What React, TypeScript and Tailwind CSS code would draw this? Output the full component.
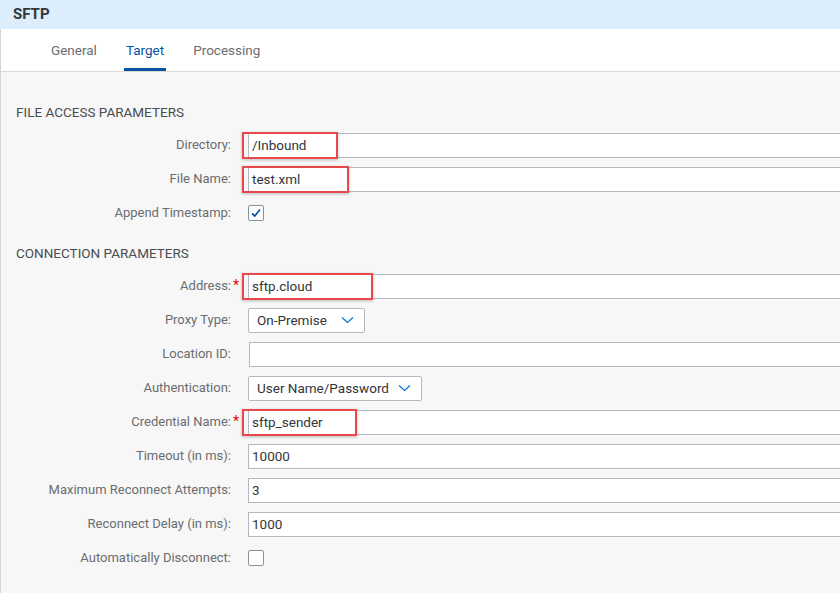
import React from "react";

const font = { fontFamily: "Roboto, 'Liberation Sans', Arial, sans-serif" };

function Chevron() {
  return (
    <svg width="13" height="8" viewBox="0 0 13 8" className="shrink-0">
      <path d="M1 1.5 L6.5 6.5 L12 1.5" fill="none" stroke="#0a6ed1" strokeWidth="1.2" />
    </svg>
  );
}

function RedBox({ left, width, top = -1, height = 27 }: { left: number; width: number; top?: number; height?: number }) {
  return (
    <div
      className="absolute border-2 border-[#e8474c] shadow-[0_1px_3px_rgba(0,0,0,0.25)] pointer-events-none"
      style={{ left, width, top, height }}
    />
  );
}

function Row({
  label,
  required,
  children,
}: {
  label: string;
  required?: boolean;
  children: React.ReactNode;
}) {
  return (
    <div className="flex items-center h-[34px]">
      <div className="w-[230px] shrink-0 text-right text-[13px] text-[#6a6d70] whitespace-nowrap">{label}</div>
      <div className="w-[17px] shrink-0 h-full flex items-center">
        {required && <span className="text-[#e00] text-[14px] ml-[2px] -mt-[2px]">*</span>}
      </div>
      <div className="flex-1 flex items-center h-full relative">{children}</div>
    </div>
  );
}

function TextInput({ value, red }: { value: string; red?: number }) {
  return (
    <div className="relative w-[610px] h-[25px]">
      <div className="h-full bg-white border border-[#b4b9c1] flex items-center pl-[3px] text-[13.5px] text-[#32363a]">
        {value}
      </div>
      {red ? <RedBox left={-6} width={red} /> : null}
    </div>
  );
}

function Select({ value, width }: { value: string; width: number }) {
  return (
    <div
      className="h-[25px] bg-white border border-[#b4b9c1] rounded-[2px] flex items-center justify-between pl-[8px] pr-[10px] text-[13.5px] text-[#32363a]"
      style={{ width }}
    >
      <span>{value}</span>
      <Chevron />
    </div>
  );
}

function Checkbox({ checked }: { checked?: boolean }) {
  return (
    <div className="w-[16px] h-[16px] bg-white border border-[#89919a] rounded-[2px] flex items-center justify-center">
      {checked && (
        <svg width="12" height="12" viewBox="0 0 12 12">
          <path d="M2 6.5 L4.8 9 L10 2.5" fill="none" stroke="#0854a0" strokeWidth="1.7" />
        </svg>
      )}
    </div>
  );
}

export default function App() {
  return (
    <div className="w-[840px] h-[593px] overflow-hidden bg-[#f7f7f7] flex flex-col" style={font}>
      <div className="h-[29px] shrink-0 bg-[#dcedfc] flex items-center pl-[13px] text-[15px] font-bold text-[#32363a]">
        SFTP
      </div>
      <div className="flex-1 flex flex-col border-l border-[#d5d5d5]">
        <div className="h-[43px] shrink-0 bg-white border-b border-[#d9d9d9] flex items-stretch pl-[48px] gap-[25px] text-[13.5px]">
          <div className="flex items-center px-[2px] text-[#6a6d70] border-b-[3px] border-transparent pt-[3px]">General</div>
          <div className="flex items-center px-[2px] text-[#0854a0] border-b-[3px] border-[#0854a0] pt-[3px]">Target</div>
          <div className="flex items-center px-[2px] text-[#6a6d70] border-b-[3px] border-transparent pt-[3px]">Processing</div>
        </div>
        <div className="flex flex-col">
          <div className="mt-[32px] pl-[15px] h-[16px] leading-[16px] text-[13.5px] text-[#4a4d50]">FILE ACCESS PARAMETERS</div>
          <div className="mt-[8px]">
            <Row label="Directory:">
              <TextInput value="/Inbound" red={96} />
            </Row>
            <Row label="File Name:">
              <TextInput value="test.xml" red={107} />
            </Row>
            <Row label="Append Timestamp:">
              <Checkbox checked />
            </Row>
          </div>
          <div className="mt-[15px] pl-[15px] h-[16px] leading-[16px] text-[13.5px] text-[#4a4d50]">CONNECTION PARAMETERS</div>
          <div className="mt-[8px]">
            <Row label="Address:" required>
              <TextInput value="sftp.cloud" red={131} />
            </Row>
            <Row label="Proxy Type:">
              <Select value="On-Premise" width={117} />
            </Row>
            <Row label="Location ID:">
              <div className="ml-[1px]">
                <TextInput value="" />
              </div>
            </Row>
            <Row label="Authentication:">
              <Select value="User Name/Password" width={174} />
            </Row>
            <Row label="Credential Name:" required>
              <TextInput value="sftp_sender" red={115} />
            </Row>
            <Row label="Timeout (in ms):">
              <TextInput value="10000" />
            </Row>
            <Row label="Maximum Reconnect Attempts:">
              <TextInput value="3" />
            </Row>
            <Row label="Reconnect Delay (in ms):">
              <TextInput value="1000" />
            </Row>
            <Row label="Automatically Disconnect:">
              <Checkbox />
            </Row>
          </div>
        </div>
      </div>
    </div>
  );
}
